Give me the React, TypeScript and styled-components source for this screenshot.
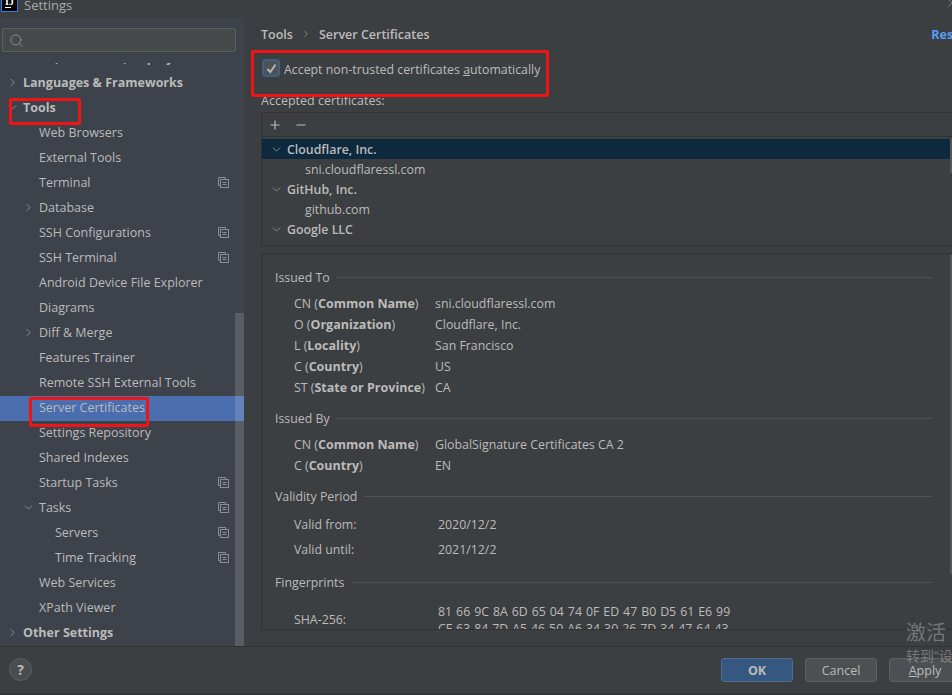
import React from 'react';
import styled, { createGlobalStyle } from 'styled-components';
import { ChevronDown, ChevronRight, Minus, Plus, Search, X } from 'lucide-react';

const GlobalStyle = createGlobalStyle`
  html, body {
    margin: 0;
    padding: 0;
    background: #3c3f41;
    overflow: hidden;
  }
  * {
    box-sizing: border-box;
  }
`;

const Window = styled.div`
  width: 952px;
  height: 695px;
  position: relative;
  display: flex;
  flex-direction: column;
  overflow: hidden;
  background: #3c3f41;
  color: #bbbbbb;
  font-family: 'Open Sans', 'Noto Sans', 'Liberation Sans', sans-serif;
  font-size: 12.5px;
`;

const TitleBar = styled.div`
  height: 18px;
  flex: none;
  display: flex;
  align-items: flex-start;
  gap: 6px;
  background: #3c3f41;
  overflow: hidden;
`;

const Logo = styled.div`
  width: 17px;
  height: 28px;
  margin-top: -16px;
  margin-left: 1px;
  position: relative;
  background: #000;
  border: 1px solid #2b7de0;
  border-top: 0;
  color: #fff;
  font: bold 10px 'Liberation Serif', serif;
  padding: 13px 0 0 3px;
  line-height: 10px;
  &::after {
    content: '';
    position: absolute;
    left: 3px;
    top: 23px;
    width: 6px;
    height: 1px;
    background: #fff;
  }
`;

const TitleText = styled.span`
  font-size: 13px;
  line-height: 11px;
  color: #a9a9a9;
`;

const CloseGlyph = styled.span`
  margin-left: auto;
  margin-right: -7px;
  margin-top: -4px;
  color: #8f9294;
`;

const Main = styled.div`
  flex: 1;
  min-height: 0;
  display: flex;
`;

const Sidebar = styled.aside`
  width: 244px;
  flex: none;
  display: flex;
  flex-direction: column;
  background: #3e424b;
  position: relative;
`;

const SearchBox = styled.div`
  height: 24px;
  margin: 10px 8px 0 2px;
  flex: none;
  display: flex;
  align-items: center;
  padding-left: 6px;
  background: #45494a;
  border: 1px solid #5e6060;
  border-radius: 2px;
  color: #8d9090;
`;

const Tree = styled.div`
  flex: 1;
  min-height: 0;
  margin-top: 11px;
  overflow: hidden;
`;

const TreeScroll = styled.div`
  margin-top: -17px;
`;

const RowBox = styled.div<{ $level: number; $selected?: boolean }>`
  height: 25px;
  display: flex;
  align-items: center;
  padding-left: ${p => 7 + p.$level * 16}px;
  padding-right: 15px;
  padding-bottom: 2px;
  background: ${p => (p.$selected ? '#4b6eaf' : 'transparent')};
`;

const ArrowSlot = styled.span`
  width: 16px;
  flex: none;
  display: flex;
  align-items: center;
  color: #9a9da1;
  & svg {
    margin-left: -1px;
  }
`;

const RowLabel = styled.span<{ $bold?: boolean }>`
  flex: 1;
  font-weight: ${p => (p.$bold ? 700 : 400)};
  white-space: nowrap;
`;

const ScrollThumb = styled.div`
  position: absolute;
  right: 0;
  top: 295px;
  bottom: 0;
  width: 9px;
  background: rgba(255, 255, 255, 0.14);
`;

const Content = styled.section`
  flex: 1;
  min-width: 0;
  display: flex;
  flex-direction: column;
  padding-left: 17px;
  overflow: hidden;
`;

const Crumbs = styled.div`
  height: 32px;
  flex: none;
  display: flex;
  align-items: center;
  gap: 8px;
  font-weight: 600;
`;

const ResetLink = styled.a`
  margin-left: auto;
  margin-right: -14px;
  color: #589df6;
  font-weight: 700;
`;

const CheckRow = styled.label`
  margin-top: 10px;
  height: 18px;
  flex: none;
  display: flex;
  align-items: center;
  gap: 4px;
  padding-left: 1px;
  font-size: 12.35px;
`;

const CheckBox = styled.span`
  width: 18px;
  height: 18px;
  margin-top: -2px;
  display: flex;
  align-items: center;
  justify-content: center;
  background: #4e5254;
  border: 2px solid #3d6185;
  border-radius: 4px;
`;

const Hotkey = styled.span`
  text-decoration: underline;
`;

const SectionLabel = styled.div`
  margin-top: 14px;
  height: 20px;
  flex: none;
  line-height: 17px;
`;

const CertTable = styled.div`
  height: 134px;
  flex: none;
  display: flex;
  flex-direction: column;
  border: 1px solid #323232;
  border-right: 0;
  overflow: hidden;
  position: relative;
  font-size: 12.35px;
`;

const TableToolbar = styled.div`
  height: 24px;
  flex: none;
  display: flex;
  align-items: center;
  gap: 12px;
  padding-left: 6px;
  border-bottom: 1px solid #323232;
`;

const CertRow = styled.div<{ $child?: boolean; $selected?: boolean }>`
  height: 20px;
  flex: none;
  display: flex;
  align-items: center;
  padding-left: ${p => (p.$child ? 43 : 9)}px;
  font-weight: ${p => (p.$child ? 400 : 600)};
  background: ${p => (p.$selected ? '#0d293e' : 'transparent')};
`;

const TreeSpacer = styled.div`
  height: 2px;
  flex: none;
`;

const EdgeThumb = styled.div`
  position: absolute;
  right: 0;
  width: 2px;
  background: #55585a;
`;

const TableThumb = styled(EdgeThumb)`
  top: 26px;
  height: 34px;
`;

const DetailThumb = styled(EdgeThumb)`
  top: 1px;
  height: 319px;
`;

const DetailPanel = styled.div`
  margin-top: 7px;
  height: 377px;
  flex: none;
  position: relative;
  padding: 13px 19px 0 13px;
  border: 1px solid #323232;
  border-right: 0;
  overflow: hidden;
  font-size: 12.35px;
  & b {
    font-size: 12.5px;
  }
`;

const GroupTitle = styled.div<{ $gap: number }>`
  height: 20px;
  margin-top: ${p => p.$gap}px;
  display: flex;
  align-items: center;
  gap: 7px;
  &::after {
    content: '';
    flex: 1;
    height: 1px;
    background: #515151;
  }
`;

const NameGrid = styled.div`
  margin-top: 6px;
  padding-left: 19px;
  display: grid;
  grid-template-columns: 141px 1fr;
  grid-auto-rows: 21px;
  align-items: center;
`;

const DateGrid = styled.div`
  margin-top: 6px;
  padding-left: 19px;
  display: grid;
  grid-template-columns: 144px 1fr;
  grid-auto-rows: 25px;
  align-items: center;
`;

const FingerprintGrid = styled.div`
  margin-top: 11px;
  padding-left: 19px;
  display: grid;
  grid-template-columns: 144px 1fr;
  align-items: center;
`;

const HashLabel = styled.span`
  margin-top: -1px;
`;

const HashLines = styled.div`
  line-height: 17px;
  white-space: nowrap;
  word-spacing: 0.75px;
`;

const Footer = styled.footer`
  height: 47px;
  flex: none;
  display: flex;
  align-items: flex-start;
  padding: 11px 0 0 9px;
  margin-bottom: 2px;
  border-top: 1px solid #323232;
  background: #3c3f41;
`;

const HelpButton = styled.div`
  width: 23px;
  height: 23px;
  display: flex;
  align-items: center;
  justify-content: center;
  border-radius: 50%;
  background: #4a4d4f;
  border: 1px solid #5c5f60;
  font-weight: 700;
  font-size: 14px;
`;

const Actions = styled.div`
  margin-left: auto;
  margin-right: -9px;
  display: flex;
  gap: 12px;
`;

const DialogButton = styled.button<{ $primary?: boolean }>`
  width: 72px;
  height: 24px;
  padding: 0;
  font: inherit;
  font-weight: ${p => (p.$primary ? 700 : 400)};
  color: #bbbbbb;
  background: ${p => (p.$primary ? '#365880' : '#4c5052')};
  border: 1px solid ${p => (p.$primary ? '#4c708c' : '#5e6060')};
  border-radius: 3px;
`;

const BottomStrip = styled.div`
  position: absolute;
  left: 0;
  right: 0;
  bottom: 0;
  height: 2px;
  background: #333537;
`;

const Watermark = styled.div`
  position: absolute;
  left: 906px;
  top: 620px;
  color: rgba(200, 200, 200, 0.42);
  font-family: 'Liberation Sans', 'Noto Sans CJK SC', sans-serif;
  white-space: nowrap;
  pointer-events: none;
`;

const WatermarkBig = styled.div`
  font-size: 20px;
  line-height: 26px;
`;

const WatermarkSmall = styled.div`
  font-size: 14px;
  line-height: 20px;
`;

const Mark = styled.div`
  position: absolute;
  border: 3px solid #f01414;
  border-radius: 2px;
  pointer-events: none;
`;

const ToolsMark = styled(Mark)`
  left: 9px;
  top: 98px;
  width: 72px;
  height: 27px;
`;

const ServerMark = styled(Mark)`
  left: 29px;
  top: 397px;
  width: 120px;
  height: 30px;
`;

const CheckMark = styled(Mark)`
  left: 251px;
  top: 50px;
  width: 298px;
  height: 47px;
`;

const CopyIcon = () => (
  <svg width="11" height="11" viewBox="0 0 11 11" fill="none" stroke="#8b8e92" strokeWidth="1">
    <path d="M2.5 8.5H.5V.5h7v2" />
    <rect x="2.5" y="2.5" width="8" height="8" />
    <path d="M4.5 5.5h4M4.5 7.5h4" />
  </svg>
);

type TreeItem = { label: string; level: number; bold?: boolean; arrow?: 'right' | 'down'; copy?: boolean; selected?: boolean };

const treeItems: TreeItem[] = [
  { label: 'Build, Execution, Deployment', level: 0, bold: true, arrow: 'right' },
  { label: 'Languages & Frameworks', level: 0, bold: true, arrow: 'right' },
  { label: 'Tools', level: 0, bold: true, arrow: 'down' },
  { label: 'Web Browsers', level: 1 },
  { label: 'External Tools', level: 1 },
  { label: 'Terminal', level: 1, copy: true },
  { label: 'Database', level: 1, arrow: 'right' },
  { label: 'SSH Configurations', level: 1, copy: true },
  { label: 'SSH Terminal', level: 1, copy: true },
  { label: 'Android Device File Explorer', level: 1 },
  { label: 'Diagrams', level: 1 },
  { label: 'Diff & Merge', level: 1, arrow: 'right' },
  { label: 'Features Trainer', level: 1 },
  { label: 'Remote SSH External Tools', level: 1 },
  { label: 'Server Certificates', level: 1, selected: true },
  { label: 'Settings Repository', level: 1 },
  { label: 'Shared Indexes', level: 1 },
  { label: 'Startup Tasks', level: 1, copy: true },
  { label: 'Tasks', level: 1, arrow: 'down', copy: true },
  { label: 'Servers', level: 2, copy: true },
  { label: 'Time Tracking', level: 2, copy: true },
  { label: 'Web Services', level: 1 },
  { label: 'XPath Viewer', level: 1 },
  { label: 'Other Settings', level: 0, bold: true, arrow: 'right' },
];

const certs = [
  { vendor: 'Cloudflare, Inc.', host: 'sni.cloudflaressl.com', selected: true },
  { vendor: 'GitHub, Inc.', host: 'github.com' },
  { vendor: 'Google LLC', host: 'tenor.com' },
];

const Field = ({ short, long }: { short: string; long: string }) => (
  <span>
    {short} (<b>{long}</b>)
  </span>
);

export default function App() {
  return (
    <Window>
      <GlobalStyle />
      <TitleBar>
        <Logo>IJ</Logo>
        <TitleText>Settings</TitleText>
        <CloseGlyph>
          <X size={14} strokeWidth={1.2} />
        </CloseGlyph>
      </TitleBar>

      <Main>
        <Sidebar>
          <SearchBox>
            <Search size={15} strokeWidth={1.5} />
          </SearchBox>
          <Tree>
            <TreeScroll>
              {treeItems.map(item => (
                <RowBox key={item.label} $level={item.level} $selected={item.selected}>
                  <ArrowSlot>
                    {item.arrow === 'right' && <ChevronRight size={13} strokeWidth={1.5} />}
                    {item.arrow === 'down' && <ChevronDown size={13} strokeWidth={1.5} />}
                  </ArrowSlot>
                  <RowLabel $bold={item.bold}>{item.label}</RowLabel>
                  {item.copy && <CopyIcon />}
                </RowBox>
              ))}
            </TreeScroll>
          </Tree>
          <ScrollThumb />
        </Sidebar>

        <Content>
          <Crumbs>
            <span>Tools</span>
            <ChevronRight size={10} strokeWidth={1.4} />
            <span>Server Certificates</span>
            <ResetLink>Reset</ResetLink>
          </Crumbs>

          <CheckRow>
            <CheckBox>
              <svg width="11" height="11" viewBox="0 0 11 11" fill="none" stroke="#b4b6b8" strokeWidth="2">
                <path d="M1.5 6l2.8 3.2L9.5 1.5" />
              </svg>
            </CheckBox>
            <span>
              Accept non-trusted certificates <Hotkey>a</Hotkey>utomatically
            </span>
          </CheckRow>

          <SectionLabel>Accepted certificates:</SectionLabel>

          <CertTable>
            <TableToolbar>
              <Plus size={14} strokeWidth={2} />
              <Minus size={14} strokeWidth={2} />
            </TableToolbar>
            <TreeSpacer />
            {certs.map(cert => (
              <React.Fragment key={cert.vendor}>
                <CertRow $selected={cert.selected}>
                  <ArrowSlot>
                    <ChevronDown size={13} strokeWidth={1.5} />
                  </ArrowSlot>
                  <span>{cert.vendor}</span>
                </CertRow>
                <CertRow $child>{cert.host}</CertRow>
              </React.Fragment>
            ))}
            <TableThumb />
          </CertTable>

          <DetailPanel>
            <GroupTitle $gap={0}>Issued To</GroupTitle>
            <NameGrid>
              <Field short="CN" long="Common Name" />
              <span>sni.cloudflaressl.com</span>
              <Field short="O" long="Organization" />
              <span>Cloudflare, Inc.</span>
              <Field short="L" long="Locality" />
              <span>San Francisco</span>
              <Field short="C" long="Country" />
              <span>US</span>
              <Field short="ST" long="State or Province" />
              <span>CA</span>
            </NameGrid>

            <GroupTitle $gap={10}>Issued By</GroupTitle>
            <NameGrid>
              <Field short="CN" long="Common Name" />
              <span>GlobalSignature Certificates CA 2</span>
              <Field short="C" long="Country" />
              <span>EN</span>
            </NameGrid>

            <GroupTitle $gap={10}>Validity Period</GroupTitle>
            <DateGrid>
              <span>Valid from:</span>
              <span>2020/12/2</span>
              <span>Valid until:</span>
              <span>2021/12/2</span>
            </DateGrid>

            <GroupTitle $gap={10}>Fingerprints</GroupTitle>
            <FingerprintGrid>
              <HashLabel>SHA-256:</HashLabel>
              <HashLines>
                81 66 9C 8A 6D 65 04 74 0F ED 47 B0 D5 61 E6 99
                <br />
                CF 63 84 7D A5 46 50 A6 34 30 26 7D 34 47 64 43
              </HashLines>
            </FingerprintGrid>
            <DetailThumb />
          </DetailPanel>
        </Content>
      </Main>

      <Footer>
        <HelpButton>?</HelpButton>
        <Actions>
          <DialogButton $primary>OK</DialogButton>
          <DialogButton>Cancel</DialogButton>
          <DialogButton>
            <Hotkey>A</Hotkey>pply
          </DialogButton>
        </Actions>
      </Footer>
      <BottomStrip />

      <Watermark>
        <WatermarkBig>激活</WatermarkBig>
        <WatermarkSmall>转到“设置”以激活</WatermarkSmall>
      </Watermark>

      <ToolsMark />
      <ServerMark />
      <CheckMark />
    </Window>
  );
}
